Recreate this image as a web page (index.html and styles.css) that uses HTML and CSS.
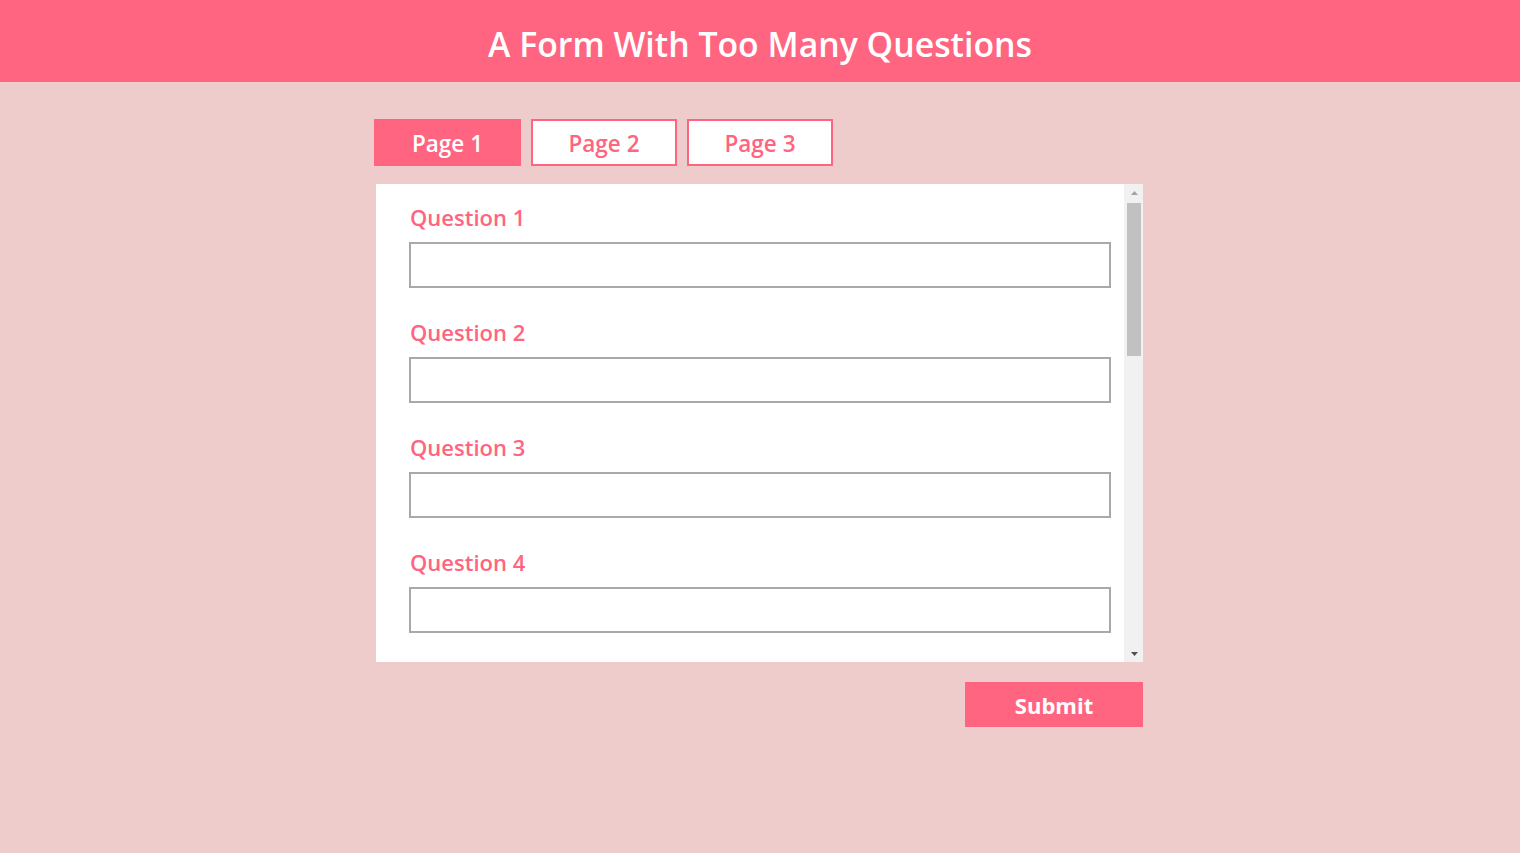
FILE: index.html
```
<!DOCTYPE html>
<html lang="en">
<head>
<meta charset="utf-8">
<title>A Form With Too Many Questions</title>
<link rel="stylesheet" href="styles.css">
</head>
<body>
<header class="topbar">
  <h1 class="title">A Form With Too Many Questions</h1>
</header>
<main class="wrap">
  <nav class="tabs">
    <button class="tab active">Page 1</button>
    <button class="tab">Page 2</button>
    <button class="tab">Page 3</button>
  </nav>
  <div class="panel">
    <form class="panel-body">
      <div class="q"><label class="q-label">Question 1</label><input class="q-input" type="text"></div>
      <div class="q"><label class="q-label">Question 2</label><input class="q-input" type="text"></div>
      <div class="q"><label class="q-label">Question 3</label><input class="q-input" type="text"></div>
      <div class="q"><label class="q-label">Question 4</label><input class="q-input" type="text"></div>
    </form>
    <div class="scrollbar" aria-hidden="true">
      <div class="sb-btn">
        <svg width="7" height="4" viewBox="0 0 7 4"><path d="M0 4 L3.5 0 L7 4 Z" fill="#a3a3a3"/></svg>
      </div>
      <div class="sb-track"><div class="sb-thumb"></div></div>
      <div class="sb-btn">
        <svg width="7" height="4" viewBox="0 0 7 4"><path d="M0 0 L7 0 L3.5 4 Z" fill="#505050"/></svg>
      </div>
    </div>
  </div>
  <div class="actions">
    <button class="submit">Submit</button>
  </div>
</main>
</body>
</html>
```
FILE: styles.css
```
* { box-sizing: border-box; }
html, body { margin: 0; padding: 0; }
body {
  background: #eecccc;
  font-family: "Open Sans", "Noto Sans", sans-serif;
  height: 853px;
  overflow: hidden;
}
.topbar {
  background: #ff6480;
  height: 82px;
  display: flex;
  align-items: center;
  justify-content: center;
}
.title {
  margin: 6px 0 0 0;
  color: #fff;
  font-size: 33.8px;
  font-weight: 600;
}
.wrap {
  width: 767px;
  margin: 37px 0 0 calc(50% - 384px);
}
.tabs {
  display: flex;
  gap: 10px;
  margin-left: -2px;
}
.tab {
  width: 146px;
  height: 47px;
  background: #fff;
  border: 2px solid #ff6480;
  color: #ff6480;
  font-family: inherit;
  font-size: 22.5px;
  font-weight: 600;
  padding: 1px 0 0 0;
}
.tab.active {
  width: 147px;
  background: #ff6480;
  color: #fff;
}
.panel {
  margin-top: 18px;
  height: 478px;
  background: #fff;
  display: flex;
}
.panel-body {
  flex: 1;
  overflow: hidden;
  padding: 18px 13px 0 33px;
}
.scrollbar {
  width: 19px;
  background: #f1f1f1;
  display: flex;
  flex-direction: column;
}
.sb-btn {
  height: 17px;
  display: flex;
  align-items: center;
  justify-content: center;
  padding-left: 1px;
}
.sb-track {
  flex: 1;
  padding: 2px 2px 0 3px;
}
.sb-thumb {
  height: 153px;
  background: #c1c1c1;
}
.q {
  display: flex;
  flex-direction: column;
  margin-bottom: 29px;
}
.q-label {
  color: #ff6480;
  font-size: 22px;
  font-weight: 600;
  line-height: 30px;
  height: 30px;
  padding-left: 1px;
}
.q-input {
  margin-top: 10px;
  width: 100%;
  height: 46px;
  border: 2px solid #a9a9a9;
  background: #fff;
  font-family: inherit;
  font-size: 18px;
  padding: 0 8px;
  outline: none;
}
.actions {
  display: flex;
  justify-content: flex-end;
  margin-top: 20px;
}
.submit {
  width: 178px;
  height: 45px;
  background: #ff6480;
  border: none;
  color: #fff;
  font-family: inherit;
  font-size: 22px;
  font-weight: 700;
  padding: 0;
}
```
